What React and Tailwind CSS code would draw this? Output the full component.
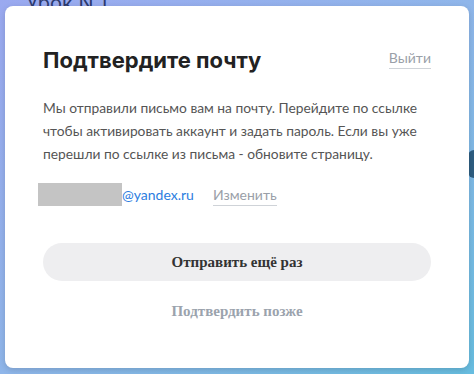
export default function App() {
  return (
    <div className="relative h-[374px] w-[474px] overflow-hidden bg-gradient-to-br from-[#9aa9f0] via-[#8fb6ea] to-[#67bde0] pt-[6px]">
      {/* page header behind modal */}
      <div className="absolute left-[26px] top-[-12px] font-['Inter',sans-serif] text-[20px] text-[#2c3a6e]">
        Урок N 1
      </div>
      {/* dark tab peeking on the right */}
      <div className="absolute right-0 top-[150px] h-[28px] w-[6px] rounded-l-[6px] bg-[#2d5d80]" />

      <div className="relative mx-[5px] h-[362px] rounded-[8px] bg-white px-[38px] pt-[40px] shadow-[0_2px_6px_rgba(0,0,0,0.15)]">
        <div className="flex items-center justify-between">
          <h1 className="font-['Inter',sans-serif] text-[22px] font-bold leading-[28px] text-[#222]">
            Подтвердите почту
          </h1>
          <button className="mb-[2px] border-b border-[#cfd3d8] pb-[1px] font-['Lato',sans-serif] text-[14px] leading-[18px] text-[#9aa0a8]">
            Выйти
          </button>
        </div>

        <p className="mt-[22px] font-['Lato',sans-serif] text-[13.8px] leading-[23px] text-[#555]">
          Мы отправили письмо вам на почту. Перейдите по ссылке чтобы
          активировать аккаунт и задать пароль. Если вы уже перешли по ссылке
          из письма - обновите страницу.
        </p>

        <div className="mt-[18px] flex items-center font-['Lato',sans-serif] text-[14px]">
          <div className="ml-[-5px] h-[23px] w-[84px] bg-[#c4c4c4]" />
          <span className="text-[#2b7de0]">@yandex.ru</span>
          <button className="ml-[19px] border-b border-[#cfd3d8] text-[#9aa0a8]">
            Изменить
          </button>
        </div>

        <button className="mt-[37px] flex h-[38px] w-full items-center justify-center rounded-full bg-[#eeeef0] font-['Liberation_Serif',serif] text-[15px] font-bold text-[#333]">
          Отправить ещё раз
        </button>

        <button className="mt-[19px] block w-full text-center font-['Liberation_Serif',serif] text-[15px] font-bold text-[#9ba3ad]">
          Подтвердить позже
        </button>
      </div>
    </div>
  );
}
